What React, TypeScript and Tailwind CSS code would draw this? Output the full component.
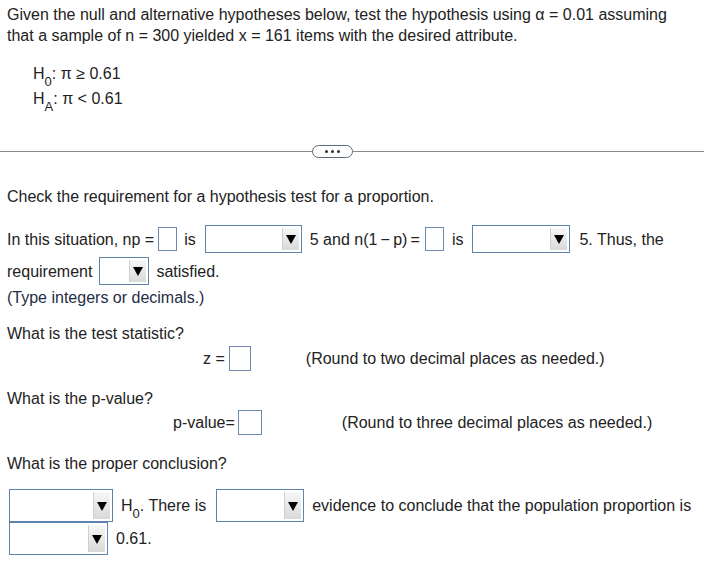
import React from "react";

function Box({ w = 19, h = 24 }: { w?: number; h?: number }) {
  return (
    <span
      className="inline-block border border-[#6d8bb0] bg-white shrink-0"
      style={{ width: w, height: h }}
    />
  );
}

function Drop({ w, h = 28 }: { w: number; h?: number }) {
  return (
    <span
      className="inline-flex items-stretch justify-end border border-[#5f83ad] bg-white shrink-0 p-[2px]"
      style={{ width: w, height: h }}
    >
      <span className="w-[17px] bg-gradient-to-b from-[#f7f7f7] to-[#d9d9d9] border-l border-[#cfcfcf] flex items-center justify-center">
        <svg width="10" height="10" viewBox="0 0 10 10">
          <path d="M0 1 L10 1 L5 10 Z" fill="#000" />
        </svg>
      </span>
    </span>
  );
}

export default function App() {
  return (
    <div className="w-[707px] h-[568px] bg-white text-[#222] text-[16px] leading-[21px] font-['Liberation_Sans',Arial,sans-serif] overflow-hidden relative">
      <div className="px-[7px] pt-[4px]">
        <p>
          Given the null and alternative hypotheses below, test the hypothesis using α = 0.01 assuming
        </p>
        <p>that a sample of n = 300 yielded x = 161 items with the desired attribute.</p>
      </div>

      <div className="pl-[33px] mt-[17px] flex flex-col gap-[4px]">
        <div>
          H<sub className="text-[13px] align-[-4px]">0</sub>: π ≥ 0.61
        </div>
        <div>
          H<sub className="text-[13px] align-[-4px]">A</sub>: π &lt; 0.61
        </div>
      </div>

      <div className="relative mt-[36px] h-[13px] flex items-center">
        <div className="h-px w-[704px] bg-[#8a8a8a]" />
        <div className="absolute left-[312px] top-0 w-[41px] h-[13px] rounded-full border border-[#5c6b7a] bg-white flex items-center justify-center gap-[3px]">
          <span className="w-[3px] h-[3px] rounded-full bg-[#333]" />
          <span className="w-[3px] h-[3px] rounded-full bg-[#333]" />
          <span className="w-[3px] h-[3px] rounded-full bg-[#333]" />
        </div>
      </div>

      <div className="px-[7px]">
        <p className="mt-[28px]">Check the requirement for a hypothesis test for a proportion.</p>

        <div className="mt-[18px] flex items-center h-[28px] whitespace-nowrap">
          <span className="shrink-0">In this situation, np =</span>
          <span className="ml-[4px] shrink-0 flex"><Box /></span>
          <span className="ml-[7px] shrink-0">is</span>
          <span className="ml-[9px] shrink-0 flex"><Drop w={97} /></span>
          <span className="ml-[8px] shrink-0">5 and n(1&thinsp;−&thinsp;p)&thinsp;=</span>
          <span className="ml-[5px] shrink-0 flex"><Box /></span>
          <span className="ml-[8px] shrink-0">is</span>
          <span className="ml-[9px] shrink-0 flex"><Drop w={98} /></span>
          <span className="ml-[9px] shrink-0">5. Thus, the</span>
        </div>
        <div className="mt-[4px] flex items-center h-[28px]">
          <span>requirement</span>
          <span className="ml-[7px] flex"><Drop w={50} /></span>
          <span className="ml-[7px]">satisfied.</span>
        </div>
        <p className="mt-[2px] text-[#1f2d45]">(Type integers or decimals.)</p>

        <p className="mt-[15px]">What is the test statistic?</p>
        <div className="mt-[2px] flex items-center h-[25px]">
          <span className="ml-[196px]">z =</span>
          <span className="ml-[4px] flex"><Box w={22} h={25} /></span>
          <span className="ml-[55px]">(Round to two decimal places as needed.)</span>
        </div>

        <p className="mt-[17px]">What is the p-value?</p>
        <div className="mt-[1px] flex items-center h-[25px]">
          <span className="ml-[166px]">p-value=</span>
          <span className="ml-[3px] flex"><Box w={24} h={25} /></span>
          <span className="ml-[80px]">(Round to three decimal places as needed.)</span>
        </div>

        <p className="mt-[18px]">What is the proper conclusion?</p>
        <div className="mt-[15px] flex items-center whitespace-nowrap">
          <span className="ml-[2px] flex shrink-0"><Drop w={104} h={33} /></span>
          <span className="ml-[8px] shrink-0">
            H<sub className="text-[13px] align-[-4px]">0</sub>. There is
          </span>
          <span className="ml-[10px] flex shrink-0"><Drop w={88} h={33} /></span>
          <span className="ml-[8px] shrink-0">evidence to conclude that the population proportion is</span>
        </div>
        <div className="flex items-center">
          <span className="ml-[2px] flex"><Drop w={99} h={33} /></span>
          <span className="ml-[8px]">0.61.</span>
        </div>
      </div>
    </div>
  );
}
